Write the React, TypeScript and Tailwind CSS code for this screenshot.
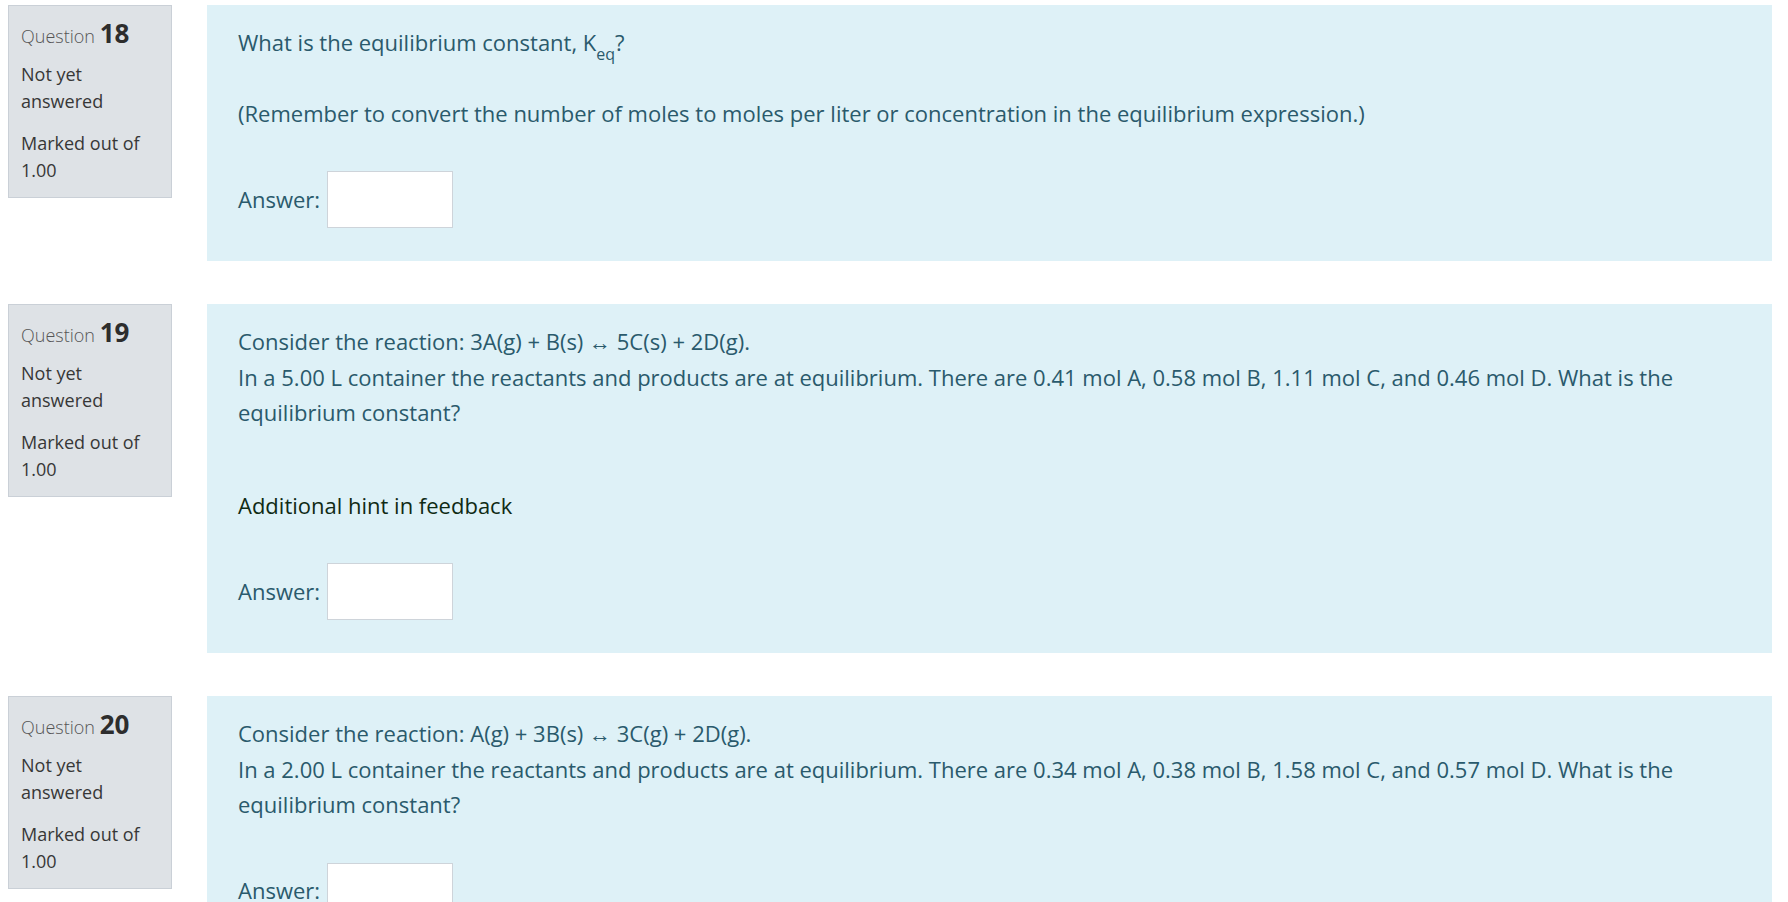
import React from "react";

type Question = {
  number: number;
  body: React.ReactNode;
};

function InfoBox({ number }: { number: number }) {
  return (
    <div className="w-[164px] shrink-0 bg-[#dee2e6] border border-[#cad0d7] px-[12px] pt-[10px] pb-[13px] text-[18px] leading-[27px] text-[#373737]">
      <h3 className="leading-[34px] mb-[8px] text-[#555]">
        <span className="font-light text-[18px]">Question</span>{" "}
        <span className="font-bold text-[26px] text-[#2d2d2d]">{number}</span>
      </h3>
      <div className="mb-[15px]">Not yet answered</div>
      <div>Marked out of 1.00</div>
    </div>
  );
}

function AnswerRow() {
  return (
    <div className="flex items-center gap-[7px]">
      <span>Answer:</span>
      <input
        type="text"
        className="w-[126px] h-[57px] bg-white border border-[#ced4da] outline-none"
      />
    </div>
  );
}

function Formulation({ children }: { children: React.ReactNode }) {
  return (
    <div className="flex-1 bg-[#def1f7] text-[#2a5a6c] text-[22px] leading-[35.5px] pl-[31px] pr-[24px] pt-[20px] pb-[33px]">
      {children}
    </div>
  );
}

const questions: Question[] = [
  {
    number: 18,
    body: (
      <>
        <p className="mb-[35px]">
          What is the equilibrium constant, K
          <sub className="text-[16px] align-[-5px] leading-none">eq</sub>?
        </p>
        <p className="mb-[40px]">
          (Remember to convert the number of moles to moles per liter or concentration in the equilibrium
          expression.)
        </p>
        <AnswerRow />
      </>
    ),
  },
  {
    number: 19,
    body: (
      <>
        <p>Consider the reaction: 3A(g) + B(s) ↔ 5C(s) + 2D(g).</p>
        <p className="mb-[57px]">
          In a 5.00 L container the reactants and products are at equilibrium. There are 0.41 mol A, 0.58
          mol B, 1.11 mol C, and 0.46 mol D. What is the equilibrium constant?
        </p>
        <p className="mb-[40px] text-[#0f2a14]">Additional hint in feedback</p>
        <AnswerRow />
      </>
    ),
  },
  {
    number: 20,
    body: (
      <>
        <p>Consider the reaction: A(g) + 3B(s) ↔ 3C(g) + 2D(g).</p>
        <p className="mb-[40px]">
          In a 2.00 L container the reactants and products are at equilibrium. There are 0.34 mol A, 0.38
          mol B, 1.58 mol C, and 0.57 mol D. What is the equilibrium constant?
        </p>
        <AnswerRow />
      </>
    ),
  },
];

export default function App() {
  return (
    <div
      className="min-h-screen bg-white pl-[8px] pr-[16px] pt-[5px]"
      style={{ fontFamily: '"Open Sans", "Noto Sans", sans-serif' }}
    >
      {questions.map((q) => (
        <div key={q.number} className="flex items-start gap-[35px] mb-[43px]">
          <InfoBox number={q.number} />
          <Formulation>{q.body}</Formulation>
        </div>
      ))}
    </div>
  );
}
